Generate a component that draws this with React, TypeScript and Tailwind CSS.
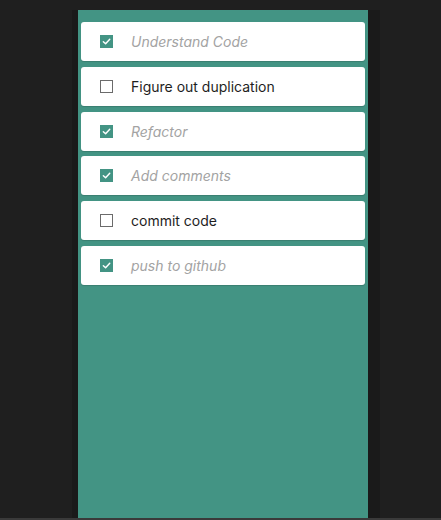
import React from "react";

type Todo = { text: string; done: boolean };

const TODOS: Todo[] = [
  { text: "Understand Code", done: true },
  { text: "Figure out duplication", done: false },
  { text: "Refactor", done: true },
  { text: "Add comments", done: true },
  { text: "commit code", done: false },
  { text: "push to github", done: true },
];

function CheckBox({ checked }: { checked: boolean }) {
  if (checked) {
    return (
      <span className="flex h-[13px] w-[13px] items-center justify-center bg-[#439484]">
        <svg width="9" height="9" viewBox="0 0 10 10" fill="none">
          <path d="M1.5 5.2 L4 7.6 L8.6 2.6" stroke="white" strokeWidth="1.6" strokeLinecap="round" strokeLinejoin="round" />
        </svg>
      </span>
    );
  }
  return <span className="block h-[13px] w-[13px] border border-[#6b6b6b] bg-white" />;
}

export default function App() {
  return (
    <div className="flex h-[520px] w-[441px] flex-col bg-[#1f1f1f] font-['Inter',sans-serif]">
      <div className="flex flex-1 pl-[72px] pt-[10px]">
        <div className="flex w-[308px] bg-[#1a1a1a] pl-[6px] pr-[12px]">
          <div className="flex flex-1 flex-col gap-[5.8px] bg-[#439484] pl-[3px] pr-[3px] pt-[12px]">
            {TODOS.map((t) => (
              <div
                key={t.text}
                className="flex h-[39px] items-center rounded-[3px] bg-white pl-[19px] shadow-[0_1px_1px_rgba(0,0,0,0.15)]"
              >
                <CheckBox checked={t.done} />
                <span
                  className={
                    t.done
                      ? "ml-[18px] text-[14px] italic text-[#a3a3a3]"
                      : "ml-[18px] text-[14px] text-[#1e1e1e]"
                  }
                >
                  {t.text}
                </span>
              </div>
            ))}
          </div>
        </div>
      </div>
      <div className="h-[2px] bg-[#3a3a3a]" />
    </div>
  );
}
